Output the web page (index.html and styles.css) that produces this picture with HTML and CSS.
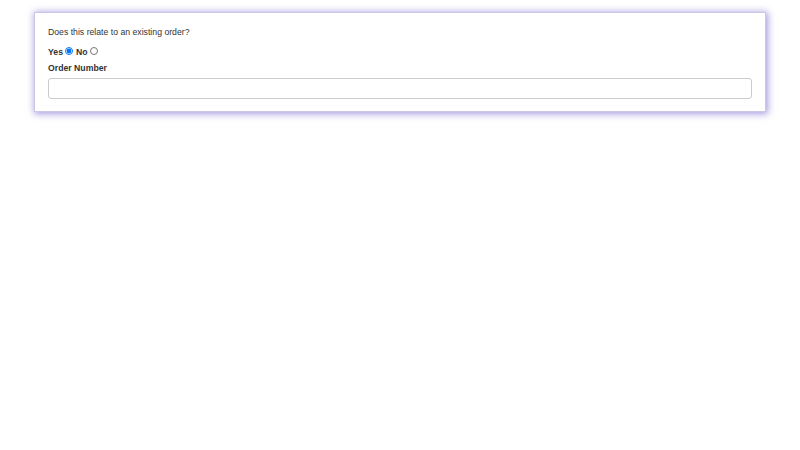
FILE: index.html
```html
<!DOCTYPE html>
<html>
<head>
<meta charset="utf-8">
<link rel="stylesheet" href="styles.css">
</head>
<body>
<div class="page">
  <div class="card">
    <p class="question">Does this relate to an existing order?</p>
    <div class="radios">
      <label class="bold" for="yes">Yes</label>
      <input type="radio" id="yes" name="existing" checked>
      <label class="bold" for="no">No</label>
      <input type="radio" id="no" name="existing">
    </div>
    <label class="bold field-label" for="order">Order Number</label>
    <input type="text" id="order" class="text-input">
  </div>
</div>
</body>
</html>
```
FILE: styles.css
```css
html, body {
  margin: 0;
  padding: 0;
  background: #fff;
}
body {
  font-family: "Liberation Sans", Arial, sans-serif;
  font-size: 8.7px;
  color: #333;
}
.page {
  padding: 12px 34px;
}
.card {
  background: #fff;
  border: 1px solid #c9c6e6;
  box-shadow: 1px 1px 7px 1px rgba(95, 80, 200, 0.55);
  padding: 13px 13px 12px 13px;
  display: flex;
  flex-direction: column;
}
.question {
  margin: 0 0 8px 0;
  line-height: 12px;
}
.radios {
  display: flex;
  align-items: center;
  gap: 2px;
  height: 12px;
  margin-bottom: 4px;
}
.radios input {
  margin: 0 1px 0 0;
  width: 8px;
  height: 8px;
  position: relative;
  top: -1px;
}
.bold {
  font-weight: bold;
  color: #333;
}
.field-label {
  display: block;
  line-height: 12px;
  margin-bottom: 4px;
}
.text-input {
  box-sizing: border-box;
  height: 21px;
  width: 100%;
  border: 1px solid #ccc;
  border-radius: 3px;
  margin: 0;
  padding: 2px 6px;
}
```
